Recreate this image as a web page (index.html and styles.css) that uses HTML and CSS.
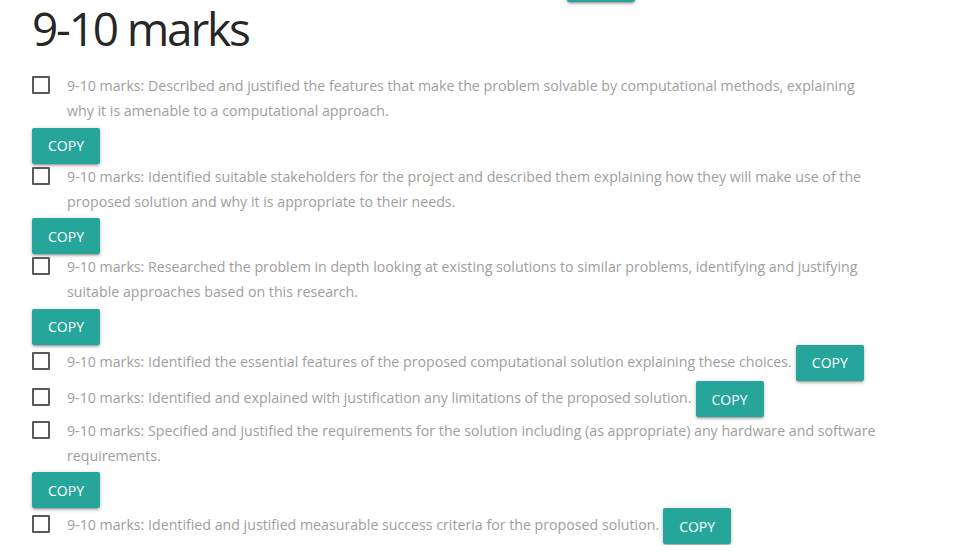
FILE: index.html
```html
<!DOCTYPE html>
<html>
<head>
<meta charset="utf-8">
<link rel="stylesheet" href="styles.css">
</head>
<body>
<div class="page">
  <div class="top-btn-wrap"><button class="btn">Copy</button></div>
  <h3 class="title">9-10 marks</h3>

  <div class="item">
    <span class="box"></span>
    <div class="text">9-10 marks: Described and justified the features that make the problem solvable by computational methods, explaining why it is amenable to a computational approach.</div>
  </div>
  <button class="btn block">Copy</button>

  <div class="item">
    <span class="box"></span>
    <div class="text">9-10 marks: Identified suitable stakeholders for the project and described them explaining how they will make use of the proposed solution and why it is appropriate to their needs.</div>
  </div>
  <button class="btn block">Copy</button>

  <div class="item">
    <span class="box"></span>
    <div class="text">9-10 marks: Researched the problem in depth looking at existing solutions to similar problems, identifying and justifying suitable approaches based on this research.</div>
  </div>
  <button class="btn block">Copy</button>

  <div class="item inline">
    <span class="box"></span>
    <div class="text">9-10 marks: Identified the essential features of the proposed computational solution explaining these choices.</div>
    <button class="btn">Copy</button>
  </div>

  <div class="item inline">
    <span class="box"></span>
    <div class="text">9-10 marks: Identified and explained with justification any limitations of the proposed solution.</div>
    <button class="btn">Copy</button>
  </div>

  <div class="item">
    <span class="box"></span>
    <div class="text">9-10 marks: Specified and justified the requirements for the solution including (as appropriate) any hardware and software requirements.</div>
  </div>
  <button class="btn block">Copy</button>

  <div class="item inline">
    <span class="box"></span>
    <div class="text">9-10 marks: Identified and justified measurable success criteria for the proposed solution.</div>
    <button class="btn">Copy</button>
  </div>
</div>
</body>
</html>
```

FILE: styles.css
```css
html, body {
  margin: 0;
  padding: 0;
  background: #ffffff;
  overflow: hidden;
}

.page {
  padding-left: 32px;
  font-family: "Open Sans", "Noto Sans", sans-serif;
}

.top-btn-wrap {
  display: flex;
  align-items: flex-end;
  height: 2px;
  padding-left: 535px;
}

.title {
  margin: 0 0 19px 0;
  font-size: 46px;
  font-weight: 400;
  letter-spacing: -2.2px;
  line-height: 52px;
  color: rgba(0, 0, 0, 0.87);
}

.item {
  display: flex;
  align-items: flex-start;
  width: 845px;
}

.box {
  flex: none;
  width: 18px;
  height: 18px;
  box-sizing: border-box;
  border: 2px solid #5a5a5a;
  border-radius: 1px;
  margin-top: 3px;
  margin-right: 17px;
}

.text {
  font-size: 14.2px;
  line-height: 25px;
  color: #9e9e9e;
}

.item.inline {
  height: 36px;
  margin-bottom: 0.5px;
}

.item.inline .box {
  margin-top: 7px;
}

.item.inline .text {
  padding-top: 4px;
  white-space: nowrap;
}

.btn {
  display: inline-block;
  flex: none;
  width: 68px;
  height: 36px;
  padding: 0;
  border: none;
  border-radius: 2px;
  background: #26a69a;
  color: #ffffff;
  font-family: "Open Sans", "Noto Sans", sans-serif;
  font-size: 14px;
  text-transform: uppercase;
  box-shadow: 0 2px 2px 0 rgba(0,0,0,0.14), 0 3px 1px -2px rgba(0,0,0,0.12), 0 1px 5px 0 rgba(0,0,0,0.2);
}

.item.inline .btn {
  margin-left: 4px;
}

.btn.block {
  display: block;
  margin-top: 4.5px;
}
```
